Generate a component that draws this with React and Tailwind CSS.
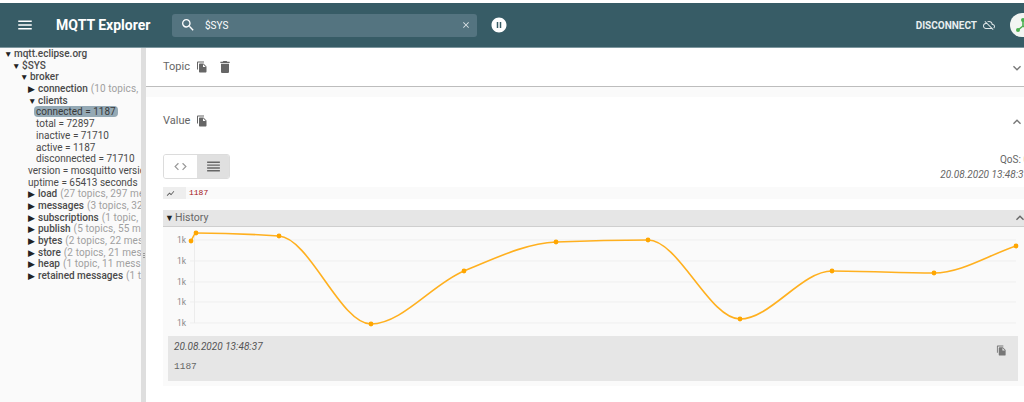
import {
  MdMenu,
  MdSearch,
  MdClose,
  MdPauseCircleFilled,
  MdOutlineCloudOff,
  MdFileCopy,
  MdDelete,
  MdExpandMore,
  MdExpandLess,
  MdCode,
  MdReorder,
  MdShowChart,
} from "react-icons/md";

const font = "font-['Roboto',sans-serif]";

const tree = [
  { pad: "pl-[4px]", arrow: "▼", name: "mqtt.eclipse.org" },
  { pad: "pl-[12px]", arrow: "▼", name: "$SYS" },
  { pad: "pl-[20px]", arrow: "▼", name: "broker" },
  { pad: "pl-[28px]", arrow: "▶", name: "connection", note: "(10 topics, 1" },
  { pad: "pl-[28px]", arrow: "▼", name: "clients" },
  { pad: "pl-[34px]", leaf: "connected = 1187", selected: true },
  { pad: "pl-[36px]", leaf: "total = 72897" },
  { pad: "pl-[36px]", leaf: "inactive = 71710" },
  { pad: "pl-[36px]", leaf: "active = 1187" },
  { pad: "pl-[36px]", leaf: "disconnected = 71710" },
  { pad: "pl-[28px]", leaf: "version = mosquitto version 1.6.9" },
  { pad: "pl-[28px]", leaf: "uptime = 65413 seconds" },
  { pad: "pl-[28px]", arrow: "▶", name: "load", note: "(27 topics, 297 messages)" },
  { pad: "pl-[28px]", arrow: "▶", name: "messages", note: "(3 topics, 32 messages)" },
  { pad: "pl-[28px]", arrow: "▶", name: "subscriptions", note: "(1 topic, 11 messages)" },
  { pad: "pl-[28px]", arrow: "▶", name: "publish", note: "(5 topics, 55 messages)" },
  { pad: "pl-[28px]", arrow: "▶", name: "bytes", note: "(2 topics, 22 messages)" },
  { pad: "pl-[28px]", arrow: "▶", name: "store", note: "(2 topics, 21 messages)" },
  { pad: "pl-[28px]", arrow: "▶", name: "heap", note: "(1 topic, 11 messages)" },
  { pad: "pl-[28px]", arrow: "▶", name: "retained messages", note: "(1 topic)" },
];

const points = [
  [191, 241], [196, 233], [279, 236], [371, 324], [464, 271], [556, 242],
  [648, 240], [740, 319], [832, 271], [934, 273], [1016, 246],
];

// same shape as d3's curveMonotoneX
const curvePath = (pts) => {
  const n = pts.length;
  const slopes = pts.slice(0, -1).map((p, i) => (pts[i + 1][1] - p[1]) / (pts[i + 1][0] - p[0]));
  const tangents = pts.map((_, i) => {
    if (i === 0) return slopes[0];
    if (i === n - 1) return slopes[n - 2];
    if (slopes[i - 1] * slopes[i] <= 0) return 0;
    return (2 * slopes[i - 1] * slopes[i]) / (slopes[i - 1] + slopes[i]);
  });
  let d = `M${pts[0][0]} ${pts[0][1]}`;
  for (let i = 0; i < n - 1; i++) {
    const h = (pts[i + 1][0] - pts[i][0]) / 3;
    d += `C${pts[i][0] + h} ${pts[i][1] + tangents[i] * h} ${pts[i + 1][0] - h} ${pts[i + 1][1] - tangents[i + 1] * h} ${pts[i + 1][0]} ${pts[i + 1][1]}`;
  }
  return d;
};

const gridLines = [240, 261, 282, 302, 323];

const TreeRow = ({ row }) => (
  <div className={`h-[11.7px] leading-[11.7px] whitespace-nowrap text-[10px] text-[#4a4a4a] ${row.pad}`}>
    {row.leaf ? (
      <span className={row.selected ? "rounded-[4px] bg-[#94a9b5] px-[2px] text-[#3a3a3a]" : ""}>{row.leaf}</span>
    ) : (
      <>
        <span className="inline-block w-[10px] text-[8.5px] leading-[10px] text-[#222]">{row.arrow}</span>
        <span className="font-medium">{row.name}</span>
        {row.note && <span className="ml-[3px] tracking-[0.1px] text-[#a0a0a0]">{row.note}</span>}
      </>
    )}
  </div>
);

const Header = () => (
  <div className="flex h-[45px] w-full shrink-0 items-center border-b border-[#7d979f] bg-[#375c66] text-white">
    <MdMenu className="ml-[16px] text-[18px]" />
    <div className="ml-[22px] w-[116px] text-[14px] font-bold">MQTT Explorer</div>
    <div className="flex h-[23px] w-[305px] items-center rounded-[3px] bg-[#547480]">
      <MdSearch className="ml-[8px] text-[16px]" />
      <span className="ml-[9px] text-[10px]">$SYS</span>
      <MdClose className="ml-auto mr-[6px] text-[10px] text-[#dfe6e8]" />
    </div>
    <MdPauseCircleFilled className="ml-[13px] text-[18px]" />
    <div className="ml-auto text-[10px] font-bold text-[#e8eeef]">DISCONNECT</div>
    <MdOutlineCloudOff className="ml-[6px] text-[12px] text-[#dfe6e8]" />
    <div className="ml-[15px] mr-[-12px] flex h-[24px] w-[26px] shrink-0 items-center justify-center rounded-full bg-[#f2f5f2]">
      <svg width="16" height="16" viewBox="0 0 16 16" className="text-[#4caf50]">
        <path d="M8 3v6M8 9l-5 4M8 9l5 3" stroke="currentColor" strokeWidth="1.6" fill="none" />
        <circle cx="8" cy="3" r="2" fill="currentColor" />
        <circle cx="3" cy="13" r="2" fill="currentColor" />
        <circle cx="13" cy="12" r="2" fill="currentColor" />
      </svg>
    </div>
  </div>
);

const Chart = () => (
  <svg width="861" height="109" viewBox="163 227 861 109" className="block shrink-0">
    {gridLines.map((y) => (
      <g key={y}>
        <line x1="190" x2="1016" y1={y} y2={y} stroke="#efefef" />
        <text x="177" y={y + 3} fontSize="8.5" fill="#8a8a8a" fontFamily="Roboto, sans-serif">1k</text>
      </g>
    ))}
    <line x1="194.5" x2="194.5" y1="234" y2="323" stroke="#ececec" />
    <path d={curvePath(points)} fill="none" stroke="#ffb01f" strokeWidth="1.6" />
    {points.map(([x, y]) => (
      <circle key={x} cx={x} cy={y} r="2.4" fill="#ffa600" />
    ))}
  </svg>
);

const App = () => (
  <div className={`flex h-[402px] w-[1024px] flex-col overflow-hidden bg-white pt-[3px] ${font}`}>
    <Header />
    <div className="flex min-h-0 flex-1">
      <div className="w-[141px] shrink-0 overflow-hidden bg-[#fafafa]">
        {tree.map((row, i) => (
          <TreeRow key={i} row={row} />
        ))}
      </div>
      <div className="flex w-[5px] shrink-0 flex-col items-center justify-center gap-[1px] bg-[#dedede] pt-[160px] pb-[100px]">
        <div className="h-[1px] w-[2px] bg-[#999]" />
        <div className="h-[1px] w-[2px] bg-[#999]" />
        <div className="h-[1px] w-[2px] bg-[#999]" />
      </div>
      <div className="w-[884px] shrink-0 text-[#555]">
        <div className="flex h-[39px] items-start border-b border-[#bdbdbd] pl-[17px] pr-[5px] pt-[12px]">
          <span className="text-[11px] leading-[14px] text-[#666]">Topic</span>
          <MdFileCopy className="ml-[6px] mt-[1px] text-[12px] text-[#666]" />
          <MdDelete className="ml-[9px] mt-[-1px] text-[16px] text-[#666]" />
          <MdExpandMore className="ml-auto text-[16px] text-[#777]" />
        </div>
        <div className="h-[10px] bg-[#fafafa]" />
        <div className="flex h-[57px] items-start pl-[17px] pr-[5px] pt-[17px]">
          <span className="text-[11px] leading-[14px] text-[#666]">Value</span>
          <MdFileCopy className="ml-[6px] mt-[1px] text-[12px] text-[#666]" />
          <MdExpandLess className="ml-auto text-[16px] text-[#777]" />
        </div>
        <div className="flex h-[33px] items-start pl-[17px] pr-[1px]">
          <div className="flex h-[25px] w-[67px] overflow-hidden rounded-[3px] border border-[#dcdcdc]">
            <div className="flex w-[33px] items-center justify-center bg-white">
              <MdCode className="text-[15px] text-[#9a9a9a]" />
            </div>
            <div className="flex flex-1 items-center justify-center bg-[#e0e0e0]">
              <MdReorder className="text-[17px] text-[#666]" />
            </div>
          </div>
          <div className="ml-auto mt-[-2px] whitespace-nowrap text-right text-[10px] leading-[15px] text-[#666]">
            <div>QoS: 0</div>
            <div className="italic">20.08.2020 13:48:37</div>
          </div>
        </div>
        <div className="ml-[17px] flex h-[12px] items-center bg-[#fafafa]">
          <div className="flex h-full w-[23px] items-center bg-[#eeeeee] pl-[3px]">
            <MdShowChart className="text-[9px] text-[#555]" />
          </div>
          <span className="ml-[3px] font-['Liberation_Mono',monospace] text-[8px] text-[#a31515]">1187</span>
        </div>
        <div className="ml-[17px] mt-[11px] h-[176px] bg-[#fafafa]">
          <div className="flex h-[17px] items-center border-b border-[#cfcfcf] bg-[#e6e6e6] pl-[2px] pr-[2px]">
            <span className="w-[10px] shrink-0 text-[9px] leading-[10px] text-[#222]">▼</span>
            <span className="text-[10.5px] leading-[14px] text-[#666]">History</span>
            <MdExpandLess className="ml-auto text-[16px] text-[#666]" />
          </div>
          <Chart />
          <div className="ml-[5px] flex h-[45px] w-[850px] items-start bg-[#e6e6e6] pl-[6px] pr-[11px] pt-[3px]">
            <div>
              <div className="text-[10px] italic text-[#555]">20.08.2020 13:48:37</div>
              <div className="mt-[6px] font-['Liberation_Mono',monospace] text-[9.5px] text-[#666]">1187</div>
            </div>
            <MdFileCopy className="ml-auto mt-[6px] text-[11px] text-[#777]" />
          </div>
        </div>
      </div>
    </div>
  </div>
);

export default App;
